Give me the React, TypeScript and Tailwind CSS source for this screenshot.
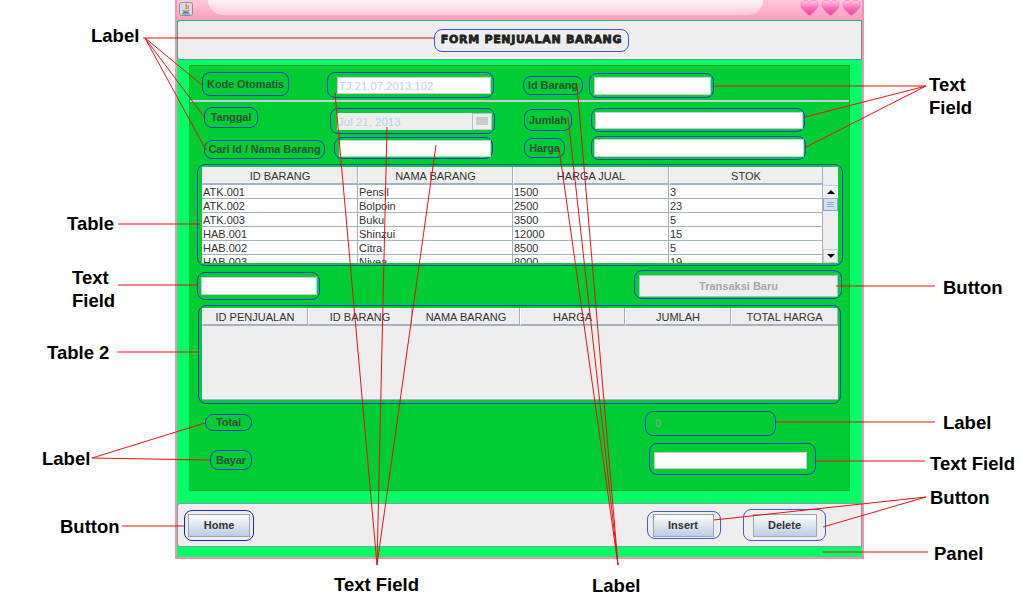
import type { ReactNode } from 'react'

const BARANG = [
  ['ATK.001', 'Pensil', '1500', '3'],
  ['ATK.002', 'Bolpoin', '2500', '23'],
  ['ATK.003', 'Buku', '3500', '5'],
  ['HAB.001', 'Shinzui', '12000', '15'],
  ['HAB.002', 'Citra', '8500', '5'],
  ['HAB.003', 'Nivea', '8000', '19'],
]

const NOTES = [
  { text: 'Label', cls: 'left-[91px] top-[26px]' },
  { text: 'Table', cls: 'left-[67px] top-[214px]' },
  { text: 'Text', cls: 'left-[72px] top-[268px]' },
  { text: 'Field', cls: 'left-[72px] top-[291px]' },
  { text: 'Table 2', cls: 'left-[47px] top-[343px]' },
  { text: 'Label', cls: 'left-[42px] top-[449px]' },
  { text: 'Button', cls: 'left-[60px] top-[517px]' },
  { text: 'Text Field', cls: 'left-[334px] top-[575px]' },
  { text: 'Label', cls: 'left-[592px] top-[576px]' },
  { text: 'Text', cls: 'left-[929px] top-[75px]' },
  { text: 'Field', cls: 'left-[929px] top-[98px]' },
  { text: 'Button', cls: 'left-[943px] top-[278px]' },
  { text: 'Label', cls: 'left-[943px] top-[413px]' },
  { text: 'Text Field', cls: 'left-[930px] top-[454px]' },
  { text: 'Button', cls: 'left-[930px] top-[488px]' },
  { text: 'Panel', cls: 'left-[934px] top-[544px]' },
]

// start and end of every red leader line
const LINES = [
  [143, 38, 434, 38],
  [145, 38, 202, 85],
  [145, 38, 205, 118],
  [145, 38, 206, 150],
  [118, 224, 200, 224],
  [118, 285, 198, 285],
  [117, 352, 198, 352],
  [92, 458, 205, 423],
  [92, 458, 210, 460],
  [122, 526, 184, 526],
  [335, 93, 377, 565],
  [387, 127, 377, 565],
  [436, 145, 377, 565],
  [577, 85, 618, 565],
  [568, 117, 618, 565],
  [559, 148, 618, 565],
  [715, 86, 926, 86],
  [805, 117, 926, 86],
  [806, 147, 926, 86],
  [836, 286, 935, 286],
  [776, 422, 935, 422],
  [815, 461, 925, 461],
  [714, 520, 926, 497],
  [823, 527, 926, 497],
  [823, 552, 928, 552],
]

function Pill({ className, children }: { className: string; children?: ReactNode }) {
  return (
    <div className={`flex items-center shrink-0 border-[1.5px] border-[#0b3fd0] rounded-[8px] ${className}`}>
      {children}
    </div>
  )
}

function Caption({ className, children }: { className: string; children: ReactNode }) {
  return (
    <Pill className={`justify-center text-[11px] tracking-[-0.1px] font-bold text-[#2c4f3c] ${className}`}>
      {children}
    </Pill>
  )
}

function Input({ className, children }: { className: string; children?: ReactNode }) {
  return (
    <div className={`flex items-center pl-[1px] pt-[2px] bg-white border-[1.5px] border-[#c8ccd2] text-[11.3px] text-[#b9d0ea] ${className}`}>
      {children}
    </div>
  )
}

function JavaButton({ className, children }: { className: string; children: ReactNode }) {
  return (
    <button className={`flex items-center justify-center pt-[1px] h-[23px] border-[1.5px] border-[#9aa6b4] bg-gradient-to-b from-[#ffffff] to-[#b9cde2] text-[11px] font-bold text-[#333333] ${className}`}>
      {children}
    </button>
  )
}

function HeaderCell({ className, children }: { className: string; children?: ReactNode }) {
  return (
    <div className={`flex items-center justify-center shrink-0 pt-[2px] h-[18px] bg-[#eeeeee] border-r border-b-2 border-[#a3b1c4] border-l-white border-l text-[11px] text-[#333333] ${className}`}>
      {children}
    </div>
  )
}

function Heart() {
  return (
    <svg width="19" height="18" viewBox="0 0 20 18">
      <defs>
        <linearGradient id="heart" x1="0" y1="0" x2="0" y2="1">
          <stop offset="0" stopColor="#ffd0e8" />
          <stop offset="0.5" stopColor="#fb6fb8" />
          <stop offset="1" stopColor="#ee3f9a" />
        </linearGradient>
      </defs>
      <path d="M10 17 C4 12 1 9 1 5.5 C1 2.5 3.2 1 5.5 1 C7.5 1 9 2 10 3.8 C11 2 12.5 1 14.5 1 C16.8 1 19 2.5 19 5.5 C19 9 16 12 10 17 Z" fill="url(#heart)" stroke="#f272b0" strokeWidth="0.6" />
    </svg>
  )
}

function JavaIcon() {
  return (
    <svg width="14" height="14" viewBox="0 0 14 14" className="shrink-0">
      <rect x="0.5" y="0.5" width="13" height="13" rx="2" fill="#d4dae2" stroke="#8d94a0" />
      <path d="M7.5 2 C5.8 4 8.8 5 6.8 7.5 M9.5 3.5 C8.5 5 9.8 5.5 8.8 7" fill="none" stroke="#e8741f" strokeWidth="1.2" />
      <path d="M3.5 8.5 C5 9.5 8.5 9.5 10 8.5 M4 10.5 H9.5 M3 12 H11" fill="none" stroke="#5a7290" strokeWidth="1" />
    </svg>
  )
}

function ScrollBar() {
  return (
    <div className="flex flex-col self-stretch w-[15px] shrink-0 bg-[#eeeeee]">
      <div className="h-[19px] shrink-0 border-b border-[#c8ccd2]" />
      <div className="flex items-center justify-center shrink-0 h-[12px] border border-white">
        <div className="w-0 h-0 border-x-[4px] border-x-transparent border-b-[4px] border-b-black" />
      </div>
      <div className="flex flex-col justify-center shrink-0 gap-[1px] h-[13px] px-[3px] bg-[#d4e0ee] border border-[#8fa8c8]">
        <div className="h-[1px] bg-[#8fa8c8]" />
        <div className="h-[1px] bg-[#8fa8c8]" />
        <div className="h-[1px] bg-[#8fa8c8]" />
      </div>
      <div className="flex-1" />
      <div className="flex items-center justify-center shrink-0 h-[14px] border border-[#c8ccd2]">
        <div className="w-0 h-0 border-x-[4px] border-x-transparent border-t-[4px] border-t-black" />
      </div>
    </div>
  )
}

function BarangTable() {
  return (
    <div className="flex flex-col w-[621px] shrink-0 self-stretch overflow-hidden">
      <div className="flex">
        <HeaderCell className="w-[156px]">ID BARANG</HeaderCell>
        <HeaderCell className="w-[155px]">NAMA BARANG</HeaderCell>
        <HeaderCell className="w-[156px]">HARGA JUAL</HeaderCell>
        <HeaderCell className="w-[154px]">STOK</HeaderCell>
      </div>
      {BARANG.map(row => (
        <div key={row[0]} className="flex shrink-0 h-[14px] bg-white border-b border-[#a3b1c4] text-[11px] leading-[15px] text-[#333333]">
          <div className="w-[156px] pl-[1px] border-r border-[#a3b1c4]">{row[0]}</div>
          <div className="w-[155px] pl-[1px] border-r border-[#a3b1c4]">{row[1]}</div>
          <div className="w-[156px] pl-[1px] border-r border-[#a3b1c4]">{row[2]}</div>
          <div className="w-[154px] pl-[1px] border-r border-[#a3b1c4]">{row[3]}</div>
        </div>
      ))}
    </div>
  )
}

function PenjualanTable() {
  return (
    <div className="flex flex-col w-[636px] h-[92px] bg-[#eeeeee] border-b border-[#a3b1c4]">
      <div className="flex">
        <HeaderCell className="w-[106px]">ID PENJUALAN</HeaderCell>
        <HeaderCell className="w-[104px]">ID BARANG</HeaderCell>
        <HeaderCell className="w-[108px]">NAMA BARANG</HeaderCell>
        <HeaderCell className="w-[105px]">HARGA</HeaderCell>
        <HeaderCell className="w-[106px]">JUMLAH</HeaderCell>
        <HeaderCell className="w-[107px]">TOTAL HARGA</HeaderCell>
      </div>
    </div>
  )
}

export default function App() {
  return (
    <div className="relative w-[1020px] h-[598px] overflow-hidden bg-white font-['Liberation_Sans',Arial,sans-serif]">
      {/* Window */}
      <div className="ml-[175px] w-[689px] h-[559px] flex flex-col bg-[#00ff66] border-x-2 border-b-2 border-[#ff8fb0]">
        {/* Title bar */}
        <div className="flex items-start h-[20px] shrink-0 bg-gradient-to-b from-[#ffc8da] to-[#ff9dbd]">
          <div className="mt-[2px] ml-[2px]"><JavaIcon /></div>
          <div className="ml-[15px] w-[555px] h-[15px] rounded-b-[20px] bg-gradient-to-b from-[#fff5f8] to-[#ffc8da]" />
          <div className="flex ml-[37px] -mt-[1px] gap-[2px]">
            <Heart />
            <Heart />
            <Heart />
          </div>
        </div>

        {/* Header panel */}
        <div className="flex items-center shrink-0 h-[40px] bg-[#eeeeee] border border-[#3aa88a] rounded-l-[3px]">
          <div className="flex items-center justify-center w-[195px] h-[23px] ml-[256px] border-[1.5px] border-[#3f55ee] rounded-[8px] font-['DejaVu_Sans',sans-serif] font-bold text-[11px] tracking-[0.7px] [-webkit-text-stroke:0.8px_#222222] text-[#222222]">
            FORM PENJUALAN BARANG
          </div>
        </div>

        {/* Form panel */}
        <div className="flex flex-col shrink-0 w-[661px] h-[426px] mt-[5px] ml-[12px] bg-[#00cc33] border border-[#00ad2e]">
          <div className="flex items-start h-[26px] mt-[6px]">
            <Caption className="w-[87px] h-[24px] ml-[12px]">Kode Otomatis</Caption>
            <Pill className="w-[167px] h-[26px] ml-[38px] pl-[9px]">
              <Input className="w-[154px] h-[17px]">TJ.21.07.2013.102</Input>
            </Pill>
            <Caption className="w-[60px] h-[19px] ml-[29px] mt-[4px]">Id Barang</Caption>
            <Pill className="w-[125px] h-[25px] ml-[6px] mt-[1px] pl-[4px]">
              <Input className="w-[117px] h-[18px]" />
            </Pill>
          </div>

          <div className="h-[2px] mt-[2px] bg-[#c4ccd4]" />

          <div className="flex items-start h-[27px] mt-[5px]">
            <Caption className="w-[54px] h-[21px] ml-[14px]">Tanggal</Caption>
            <Pill className="w-[165px] h-[26px] ml-[72px] mt-[1px] pl-[6px]">
              <div className="flex w-[155px] h-[17px] bg-[#eeeeee] text-[11.5px] text-[#b9d0ea]">
                <div className="flex-1 pl-[1px] leading-[19px]">Jul 21, 2013</div>
                <div className="flex items-center justify-center w-[20px] border border-[#b8c0c8]">
                  <div className="w-[12px] h-[8px] bg-[#c8ccd0] rounded-[1px]" />
                </div>
              </div>
            </Pill>
            <Caption className="w-[48px] h-[22px] ml-[29px] mt-[2px]">Jumlah</Caption>
            <Pill className="w-[214px] h-[24px] ml-[19px] mt-[1px] pl-[3px]">
              <Input className="w-[208px] h-[17px] border-[#a0a8b4]" />
            </Pill>
          </div>

          <div className="flex items-start h-[24px] mt-[2px]">
            <Caption className="w-[121px] h-[19px] ml-[14px] mt-[4px]">Cari Id / Nama Barang</Caption>
            <Pill className="w-[159px] h-[22px] ml-[9px] mt-[1px] pl-[4px]">
              <Input className="w-[152px] h-[17px]" />
            </Pill>
            <Caption className="w-[41px] h-[20px] ml-[31px] mt-[2px]">Harga</Caption>
            <Pill className="w-[215px] h-[24px] ml-[26px] pl-[2px]">
              <Input className="w-[210px] h-[18px]" />
            </Pill>
          </div>

          <Pill className="w-[646px] h-[102px] mt-[4px] ml-[7px] pl-[4px] py-[2px]">
            <BarangTable />
            <ScrollBar />
          </Pill>

          <div className="flex items-start h-[30px] mt-[4px]">
            <Pill className="w-[123px] h-[28px] ml-[7px] mt-[2px] pl-[3px]">
              <Input className="w-[116px] h-[18px]" />
            </Pill>
            <Pill className="w-[208px] h-[29px] ml-[314px] pl-[4px] pt-[3px]">
              <div className="flex items-center justify-center w-[199px] h-[22px] bg-[#eeeeee] border border-[#b8c0c8] text-[11px] font-bold text-[#a8a8a8]">
                Transaksi Baru
              </div>
            </Pill>
          </div>

          <Pill className="w-[643px] h-[99px] mt-[5px] ml-[8px] pl-[3px] items-start pt-[2px]">
            <PenjualanTable />
          </Pill>

          <div className="flex items-start h-[25px] mt-[7px]">
            <Caption className="w-[47px] h-[17px] ml-[15px] mt-[3px]">Total</Caption>
            <Pill className="w-[131px] h-[25px] ml-[393px] pl-[9px] text-[11px] font-bold text-[#6fae85]">0</Pill>
          </div>

          <div className="flex items-start h-[32px] mt-[7px]">
            <Caption className="w-[42px] h-[20px] ml-[20px] mt-[7px]">Bayar</Caption>
            <Pill className="w-[167px] h-[32px] ml-[397px] pl-[4px] pt-[2px]">
              <Input className="w-[153px] h-[17px] border-[#a8b0b8]" />
            </Pill>
          </div>
        </div>

        {/* Button panel */}
        <div className="flex items-center shrink-0 h-[44px] mt-[12px] bg-[#eeeeee] border border-[#6fa8a0] rounded-l-[3px]">
          <div className="flex items-center justify-center w-[70px] h-[31px] ml-[6px] border border-[#1a22ee] rounded-[8px]">
            <JavaButton className="w-[62px]">Home</JavaButton>
          </div>
          <div className="flex items-center justify-center w-[74px] h-[28px] ml-[393px] border border-[#4a55f0] rounded-[8px]">
            <JavaButton className="w-[61px] -ml-[2px]">Insert</JavaButton>
          </div>
          <div className="flex items-center justify-center w-[83px] h-[32px] ml-[22px] border border-[#4a55f0] rounded-[8px]">
            <JavaButton className="w-[64px]">Delete</JavaButton>
          </div>
        </div>
      </div>

      {/* Annotations over the screenshot */}
      <svg className="absolute left-0 top-0" width="1020" height="598">
        {LINES.map((l, i) => (
          <line key={i} x1={l[0]} y1={l[1]} x2={l[2]} y2={l[3]} stroke="#f01010" strokeWidth="1" />
        ))}
      </svg>
      {NOTES.map(n => (
        <div key={n.text + n.cls} className={`absolute text-[18.5px] leading-[20px] font-bold text-black ${n.cls}`}>
          {n.text}
        </div>
      ))}
    </div>
  )
}
